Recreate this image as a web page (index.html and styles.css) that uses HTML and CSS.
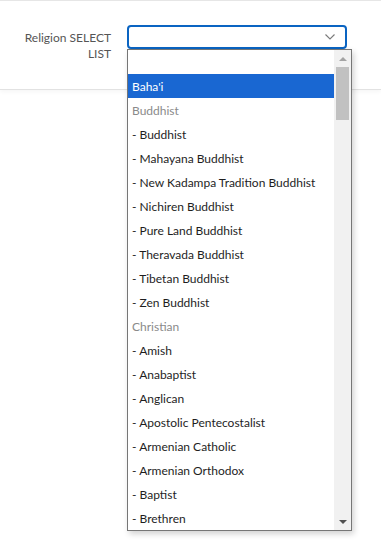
FILE: index.html
```html
<!DOCTYPE html>
<html>
<head>
<meta charset="utf-8">
<link rel="stylesheet" href="styles.css">
</head>
<body>
<div class="header">
  <div class="field">
    <label class="label">Religion SELECT LIST</label>
    <div class="select-wrap">
      <div class="select">
        <svg class="chev" width="10" height="6" viewBox="0 0 10 6"><path d="M0.5 0.5 L5 5 L9.5 0.5" fill="none" stroke="#7a7a7a" stroke-width="1.1"/></svg>
      </div>
      <div class="dropdown">
        <div class="options">
          <div class="opt"></div>
          <div class="opt sel">Baha'i</div>
          <div class="opt grp">Buddhist</div>
          <div class="opt">- Buddhist</div>
          <div class="opt">- Mahayana Buddhist</div>
          <div class="opt">- New Kadampa Tradition Buddhist</div>
          <div class="opt">- Nichiren Buddhist</div>
          <div class="opt">- Pure Land Buddhist</div>
          <div class="opt">- Theravada Buddhist</div>
          <div class="opt">- Tibetan Buddhist</div>
          <div class="opt">- Zen Buddhist</div>
          <div class="opt grp">Christian</div>
          <div class="opt">- Amish</div>
          <div class="opt">- Anabaptist</div>
          <div class="opt">- Anglican</div>
          <div class="opt">- Apostolic Pentecostalist</div>
          <div class="opt">- Armenian Catholic</div>
          <div class="opt">- Armenian Orthodox</div>
          <div class="opt">- Baptist</div>
          <div class="opt">- Brethren</div>
        </div>
        <div class="scrollbar">
          <div class="arrow up"></div>
          <div class="track"><div class="thumb"></div></div>
          <div class="arrow down"></div>
        </div>
      </div>
    </div>
  </div>
</div>
</body>
</html>
```
FILE: styles.css
```css
* { box-sizing: border-box; }
html, body { margin: 0; padding: 0; }
body {
  font-family: "Lato", "Open Sans", sans-serif;
  background: #ffffff;
  width: 381px;
  height: 549px;
  overflow: hidden;
}
.header {
  border-top: 1px solid #e6e6e6;
  border-bottom: 1px solid #e2e2e2;
  box-shadow: 0 2px 4px rgba(0,0,0,0.04);
  height: 90px;
  padding-top: 24px;
}
.field {
  display: flex;
  align-items: flex-start;
}
.label {
  width: 111px;
  text-align: right;
  font-size: 12px;
  line-height: 16px;
  color: #555;
  padding-top: 5px;
  padding-left: 22px;
}
.select-wrap {
  position: relative;
  margin-left: 16px;
  width: 220px;
}
.select {
  height: 24px;
  border: 2px solid #0a64c2;
  border-radius: 4px;
  background: #fff;
  display: flex;
  align-items: center;
  justify-content: flex-end;
  padding-right: 10px;
}
.dropdown {
  position: absolute;
  left: 0;
  top: 24px;
  width: 225px;
  height: 482px;
  border: 1px solid #767676;
  background: #fff;
  box-shadow: 2px 3px 6px rgba(0,0,0,0.18);
  display: flex;
  overflow: hidden;
}
.options {
  flex: 1;
  font-size: 12px;
  color: #1e1e1e;
}
.opt {
  height: 24px;
  line-height: 25px;
  padding-left: 4px;
  white-space: nowrap;
}
.opt.sel {
  background: #1967d2;
  color: #fff;
}
.opt.grp {
  color: #8a8a8a;
}
.scrollbar {
  width: 17px;
  background: #f1f1f1;
  display: flex;
  flex-direction: column;
  align-items: center;
}
.arrow {
  height: 17px;
  width: 17px;
  display: flex;
  align-items: center;
  justify-content: center;
}
.arrow.up::before {
  content: "";
  border-left: 4px solid transparent;
  border-right: 4px solid transparent;
  border-bottom: 4px solid #a3a3a3;
}
.arrow.down::before {
  content: "";
  border-left: 4px solid transparent;
  border-right: 4px solid transparent;
  border-top: 4px solid #505050;
}
.track {
  flex: 1;
  width: 17px;
  padding: 0 2px;
}
.thumb {
  height: 53px;
  background: #c1c1c1;
}
```
